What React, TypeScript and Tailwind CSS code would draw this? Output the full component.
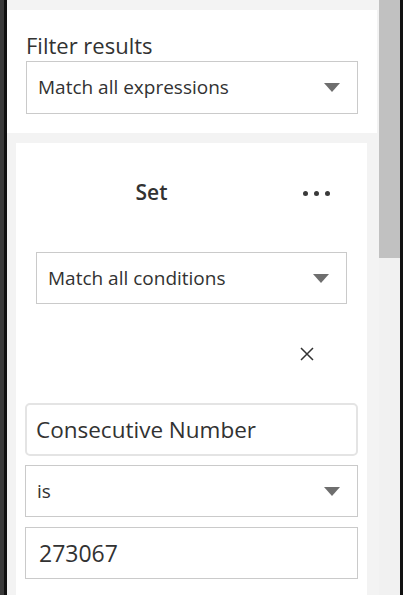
import React from "react";

const font = { fontFamily: '"Open Sans", "Noto Sans", sans-serif' };

function Caret() {
  return (
    <svg width="16" height="9" viewBox="0 0 16 9" className="shrink-0">
      <path d="M0 0 H16 L8 9 Z" fill="#6e6e6e" />
    </svg>
  );
}

export default function App() {
  return (
    <div
      className="flex h-[595px] w-[409px] overflow-hidden text-[#323232]"
      style={font}
    >
      <div className="w-[4px] bg-[#3a3a3a]" />
      <div className="w-[3px] bg-[#111111]" />
      <div className="flex w-[372px] flex-col bg-[#f3f3f3] pt-[10px]">
        <div className="h-[123px] w-[370px] bg-white px-[19px] pt-[22px]">
          <div className="text-[22px] leading-[27px]">Filter results</div>
          <div className="mt-[2px] flex h-[53px] items-center justify-between border border-[#cacaca] pl-[11px] pr-[17px]">
            <span className="text-[19px]">Match all expressions</span>
            <Caret />
          </div>
        </div>
        <div className="mt-[10px] ml-[9px] w-[351px] flex-1 bg-white px-[9px]">
          <div className="relative flex h-[96px] items-center justify-center pt-[4px]">
            <span className="-ml-[80px] text-[21px] font-semibold">Set</span>
            <div className="absolute right-[28px] top-[48px] flex gap-[6px]">
              <span className="h-[5px] w-[5px] rounded-full bg-[#3a3a3a]" />
              <span className="h-[5px] w-[5px] rounded-full bg-[#3a3a3a]" />
              <span className="h-[5px] w-[5px] rounded-full bg-[#3a3a3a]" />
            </div>
          </div>
          <div className="mx-[11px] mt-[13px] flex h-[52px] items-center justify-between border border-[#cacaca] pl-[11px] pr-[17px]">
            <span className="text-[19px]">Match all conditions</span>
            <Caret />
          </div>
          <div className="flex h-[99px] items-center justify-end pr-[44px]">
            <svg width="14" height="14" viewBox="0 0 14 14">
              <path d="M1 1 L13 13 M13 1 L1 13" stroke="#323232" strokeWidth="1.5" />
            </svg>
          </div>
          <div className="flex h-[53px] items-center rounded-[5px] border-2 border-[#e4e4e4] pl-[9px] text-[22.5px]">
            Consecutive Number
          </div>
          <div className="mt-[9px] flex h-[52px] items-center justify-between border border-[#cacaca] pl-[11px] pr-[17px]">
            <span className="text-[19px]">is</span>
            <Caret />
          </div>
          <div className="mt-[10px] flex h-[52px] items-center border border-[#cacaca] pl-[13px] text-[23px]">
            273067
          </div>
        </div>
      </div>
      <div className="w-[21px] bg-[#f1f1f1]">
        <div className="h-[258px] bg-[#c1c1c1]" />
      </div>
      <div className="w-[3px] bg-[#111111]" />
      <div className="flex-1 bg-white" />
    </div>
  );
}
